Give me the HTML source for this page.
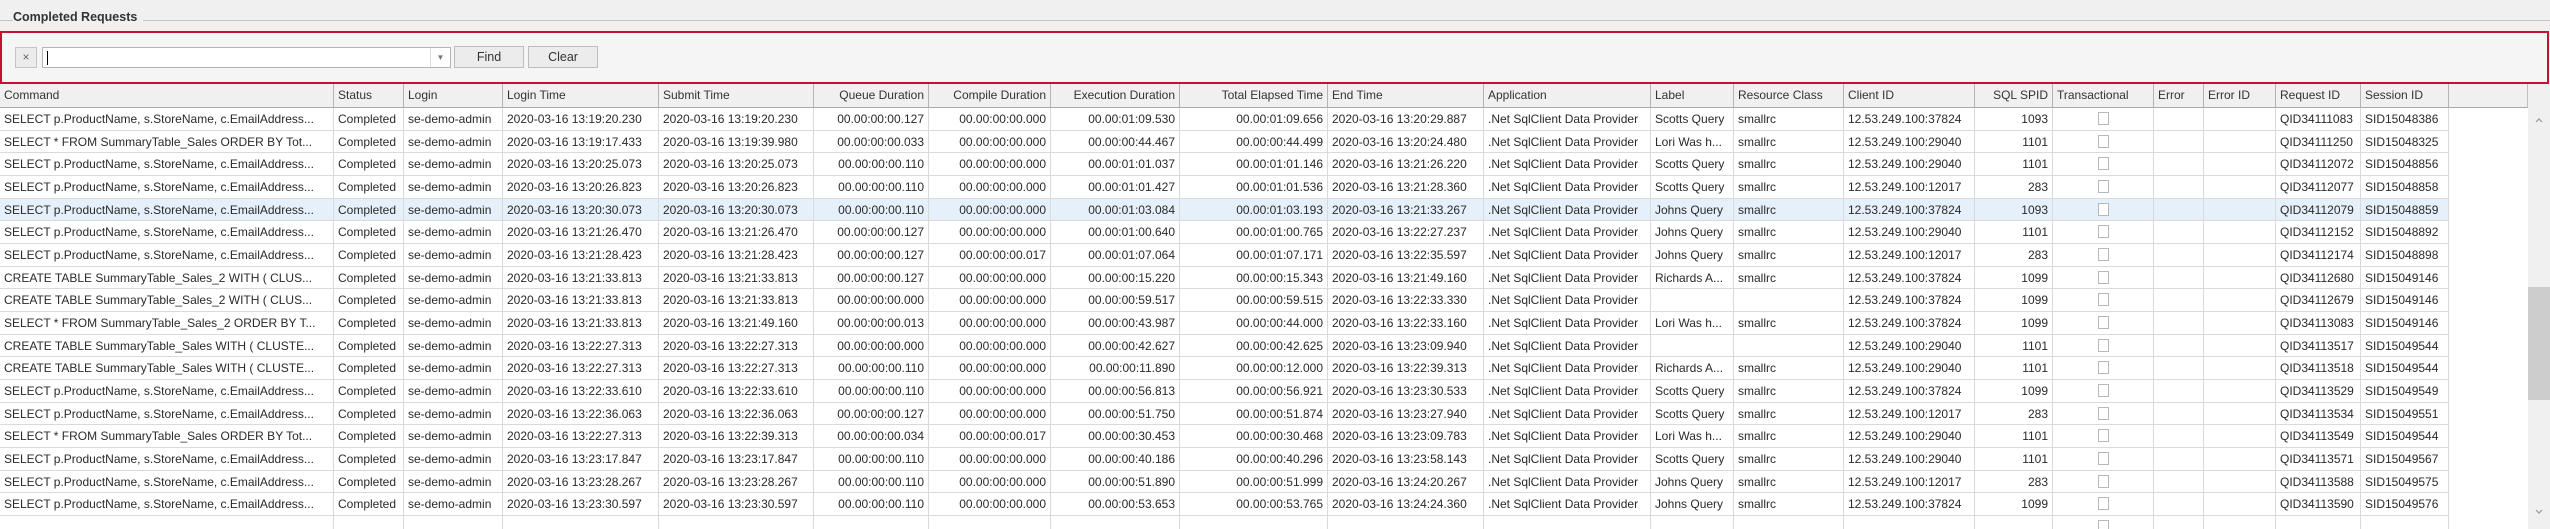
<!DOCTYPE html>
<html><head><meta charset="utf-8"><style>
*{margin:0;padding:0;box-sizing:border-box}
body{width:2550px;height:529px;overflow:hidden;background:#f0f0f0;font-family:"Liberation Sans",sans-serif;font-size:12px;color:#2a2a2a;position:relative}
.title{position:absolute;left:13px;top:10px;font-weight:bold;font-size:12.5px;color:#333;background:#f0f0f0;padding-right:6px}
.tline{position:absolute;left:0;top:20px;width:2550px;height:1px;background:#c6c6c6}
.box{position:absolute;left:0;top:31px;width:2549px;height:53px;border:2px solid #c41230;background:#f5f5f5}
.xb{position:absolute;left:15px;top:47px;width:22px;height:21px;border:1px solid #c4c4c4;background:#ececec;color:#666;text-align:center;line-height:19px;font-size:12px}
.inp{position:absolute;left:42px;top:47px;width:409px;height:21px;border:1px solid #b5b5b5;background:#fff}
.inp .cur{position:absolute;left:4px;top:3px;width:1px;height:14px;background:#000}
.inp .dd{position:absolute;right:0;top:0;width:20px;height:19px;border-left:1px solid #ddd;font-size:8px;color:#777;text-align:center;line-height:19px}
.btn{position:absolute;top:46px;height:22px;border:1px solid #bdbdbd;background:#ececec;color:#333;text-align:center;line-height:20px;font-size:12.5px}
.hdr,.row{display:grid;grid-template-columns:334px 70px 99px 156px 155px 115px 122px 129px 148px 156px 167px 83px 110px 131px 78px 101px 50px 72px 85px 88px;width:2449px}
.hdr{position:absolute;left:0;top:84px;height:24px;background:#f0f0f0}
.hwrap{position:absolute;left:0;top:84px;width:2528px;height:24px;background:#f0f0f0;border-bottom:1px solid #a9a9a9;border-right:1px solid #c0c0c0}
.hdr i{font-style:normal;border-right:1px solid #b4b4b4;border-bottom:1px solid #a9a9a9;padding:0 4px;line-height:23px;white-space:nowrap;overflow:hidden;color:#333}
.bodyw{position:absolute;left:0;top:108px;width:2528px;height:421px;background:#fff;overflow:hidden}
.row{height:22.667px}
.row i{font-style:normal;border-right:1px solid #dadada;border-bottom:1px solid #dadada;padding:0 4px;line-height:22px;white-space:nowrap;overflow:hidden}
.r{text-align:right}
.c{position:relative}
.c b{position:absolute;left:45px;top:4px;width:11px;height:13px;border:1px solid #b8b8b8;background:#fff}
.sel{background:#e5f0fa}
.sb{position:absolute;left:2528px;top:108px;width:22px;height:421px;background:#f0f0f0}
.thumb{position:absolute;left:2528px;top:287px;width:22px;height:113px;background:#cdcdcd}
.ar{position:absolute;left:2534px}
</style></head><body>
<div class="tline"></div>
<div class="title">Completed Requests</div>
<div class="box"></div>
<div class="xb">×</div>
<div class="inp"><div class="cur"></div><div class="dd">▼</div></div>
<div class="btn" style="left:454px;width:70px">Find</div>
<div class="btn" style="left:528px;width:70px">Clear</div>
<div class="hwrap"></div>
<div class="hdr"><i>Command</i><i>Status</i><i>Login</i><i>Login Time</i><i>Submit Time</i><i class="r">Queue Duration</i><i class="r">Compile Duration</i><i class="r">Execution Duration</i><i class="r">Total Elapsed Time</i><i>End Time</i><i>Application</i><i>Label</i><i>Resource Class</i><i>Client ID</i><i class="r">SQL SPID</i><i>Transactional</i><i>Error</i><i>Error ID</i><i>Request ID</i><i>Session ID</i></div>
<div class="bodyw">
<div class="row"><i>SELECT p.ProductName, s.StoreName, c.EmailAddress...</i><i>Completed</i><i>se-demo-admin</i><i>2020-03-16 13:19:20.230</i><i>2020-03-16 13:19:20.230</i><i class="r">00.00:00:00.127</i><i class="r">00.00:00:00.000</i><i class="r">00.00:01:09.530</i><i class="r">00.00:01:09.656</i><i>2020-03-16 13:20:29.887</i><i>.Net SqlClient Data Provider</i><i>Scotts Query</i><i>smallrc</i><i>12.53.249.100:37824</i><i class="r">1093</i><i class="c"><b></b></i><i></i><i></i><i>QID34111083</i><i>SID15048386</i></div>
<div class="row"><i>SELECT * FROM SummaryTable_Sales ORDER BY Tot...</i><i>Completed</i><i>se-demo-admin</i><i>2020-03-16 13:19:17.433</i><i>2020-03-16 13:19:39.980</i><i class="r">00.00:00:00.033</i><i class="r">00.00:00:00.000</i><i class="r">00.00:00:44.467</i><i class="r">00.00:00:44.499</i><i>2020-03-16 13:20:24.480</i><i>.Net SqlClient Data Provider</i><i>Lori Was h...</i><i>smallrc</i><i>12.53.249.100:29040</i><i class="r">1101</i><i class="c"><b></b></i><i></i><i></i><i>QID34111250</i><i>SID15048325</i></div>
<div class="row"><i>SELECT p.ProductName, s.StoreName, c.EmailAddress...</i><i>Completed</i><i>se-demo-admin</i><i>2020-03-16 13:20:25.073</i><i>2020-03-16 13:20:25.073</i><i class="r">00.00:00:00.110</i><i class="r">00.00:00:00.000</i><i class="r">00.00:01:01.037</i><i class="r">00.00:01:01.146</i><i>2020-03-16 13:21:26.220</i><i>.Net SqlClient Data Provider</i><i>Scotts Query</i><i>smallrc</i><i>12.53.249.100:29040</i><i class="r">1101</i><i class="c"><b></b></i><i></i><i></i><i>QID34112072</i><i>SID15048856</i></div>
<div class="row"><i>SELECT p.ProductName, s.StoreName, c.EmailAddress...</i><i>Completed</i><i>se-demo-admin</i><i>2020-03-16 13:20:26.823</i><i>2020-03-16 13:20:26.823</i><i class="r">00.00:00:00.110</i><i class="r">00.00:00:00.000</i><i class="r">00.00:01:01.427</i><i class="r">00.00:01:01.536</i><i>2020-03-16 13:21:28.360</i><i>.Net SqlClient Data Provider</i><i>Scotts Query</i><i>smallrc</i><i>12.53.249.100:12017</i><i class="r">283</i><i class="c"><b></b></i><i></i><i></i><i>QID34112077</i><i>SID15048858</i></div>
<div class="row sel"><i>SELECT p.ProductName, s.StoreName, c.EmailAddress...</i><i>Completed</i><i>se-demo-admin</i><i>2020-03-16 13:20:30.073</i><i>2020-03-16 13:20:30.073</i><i class="r">00.00:00:00.110</i><i class="r">00.00:00:00.000</i><i class="r">00.00:01:03.084</i><i class="r">00.00:01:03.193</i><i>2020-03-16 13:21:33.267</i><i>.Net SqlClient Data Provider</i><i>Johns Query</i><i>smallrc</i><i>12.53.249.100:37824</i><i class="r">1093</i><i class="c"><b></b></i><i></i><i></i><i>QID34112079</i><i>SID15048859</i></div>
<div class="row"><i>SELECT p.ProductName, s.StoreName, c.EmailAddress...</i><i>Completed</i><i>se-demo-admin</i><i>2020-03-16 13:21:26.470</i><i>2020-03-16 13:21:26.470</i><i class="r">00.00:00:00.127</i><i class="r">00.00:00:00.000</i><i class="r">00.00:01:00.640</i><i class="r">00.00:01:00.765</i><i>2020-03-16 13:22:27.237</i><i>.Net SqlClient Data Provider</i><i>Johns Query</i><i>smallrc</i><i>12.53.249.100:29040</i><i class="r">1101</i><i class="c"><b></b></i><i></i><i></i><i>QID34112152</i><i>SID15048892</i></div>
<div class="row"><i>SELECT p.ProductName, s.StoreName, c.EmailAddress...</i><i>Completed</i><i>se-demo-admin</i><i>2020-03-16 13:21:28.423</i><i>2020-03-16 13:21:28.423</i><i class="r">00.00:00:00.127</i><i class="r">00.00:00:00.017</i><i class="r">00.00:01:07.064</i><i class="r">00.00:01:07.171</i><i>2020-03-16 13:22:35.597</i><i>.Net SqlClient Data Provider</i><i>Johns Query</i><i>smallrc</i><i>12.53.249.100:12017</i><i class="r">283</i><i class="c"><b></b></i><i></i><i></i><i>QID34112174</i><i>SID15048898</i></div>
<div class="row"><i>CREATE TABLE SummaryTable_Sales_2 WITH ( CLUS...</i><i>Completed</i><i>se-demo-admin</i><i>2020-03-16 13:21:33.813</i><i>2020-03-16 13:21:33.813</i><i class="r">00.00:00:00.127</i><i class="r">00.00:00:00.000</i><i class="r">00.00:00:15.220</i><i class="r">00.00:00:15.343</i><i>2020-03-16 13:21:49.160</i><i>.Net SqlClient Data Provider</i><i>Richards A...</i><i>smallrc</i><i>12.53.249.100:37824</i><i class="r">1099</i><i class="c"><b></b></i><i></i><i></i><i>QID34112680</i><i>SID15049146</i></div>
<div class="row"><i>CREATE TABLE SummaryTable_Sales_2 WITH ( CLUS...</i><i>Completed</i><i>se-demo-admin</i><i>2020-03-16 13:21:33.813</i><i>2020-03-16 13:21:33.813</i><i class="r">00.00:00:00.000</i><i class="r">00.00:00:00.000</i><i class="r">00.00:00:59.517</i><i class="r">00.00:00:59.515</i><i>2020-03-16 13:22:33.330</i><i>.Net SqlClient Data Provider</i><i></i><i></i><i>12.53.249.100:37824</i><i class="r">1099</i><i class="c"><b></b></i><i></i><i></i><i>QID34112679</i><i>SID15049146</i></div>
<div class="row"><i>SELECT * FROM SummaryTable_Sales_2 ORDER BY T...</i><i>Completed</i><i>se-demo-admin</i><i>2020-03-16 13:21:33.813</i><i>2020-03-16 13:21:49.160</i><i class="r">00.00:00:00.013</i><i class="r">00.00:00:00.000</i><i class="r">00.00:00:43.987</i><i class="r">00.00:00:44.000</i><i>2020-03-16 13:22:33.160</i><i>.Net SqlClient Data Provider</i><i>Lori Was h...</i><i>smallrc</i><i>12.53.249.100:37824</i><i class="r">1099</i><i class="c"><b></b></i><i></i><i></i><i>QID34113083</i><i>SID15049146</i></div>
<div class="row"><i>CREATE TABLE SummaryTable_Sales WITH ( CLUSTE...</i><i>Completed</i><i>se-demo-admin</i><i>2020-03-16 13:22:27.313</i><i>2020-03-16 13:22:27.313</i><i class="r">00.00:00:00.000</i><i class="r">00.00:00:00.000</i><i class="r">00.00:00:42.627</i><i class="r">00.00:00:42.625</i><i>2020-03-16 13:23:09.940</i><i>.Net SqlClient Data Provider</i><i></i><i></i><i>12.53.249.100:29040</i><i class="r">1101</i><i class="c"><b></b></i><i></i><i></i><i>QID34113517</i><i>SID15049544</i></div>
<div class="row"><i>CREATE TABLE SummaryTable_Sales WITH ( CLUSTE...</i><i>Completed</i><i>se-demo-admin</i><i>2020-03-16 13:22:27.313</i><i>2020-03-16 13:22:27.313</i><i class="r">00.00:00:00.110</i><i class="r">00.00:00:00.000</i><i class="r">00.00:00:11.890</i><i class="r">00.00:00:12.000</i><i>2020-03-16 13:22:39.313</i><i>.Net SqlClient Data Provider</i><i>Richards A...</i><i>smallrc</i><i>12.53.249.100:29040</i><i class="r">1101</i><i class="c"><b></b></i><i></i><i></i><i>QID34113518</i><i>SID15049544</i></div>
<div class="row"><i>SELECT p.ProductName, s.StoreName, c.EmailAddress...</i><i>Completed</i><i>se-demo-admin</i><i>2020-03-16 13:22:33.610</i><i>2020-03-16 13:22:33.610</i><i class="r">00.00:00:00.110</i><i class="r">00.00:00:00.000</i><i class="r">00.00:00:56.813</i><i class="r">00.00:00:56.921</i><i>2020-03-16 13:23:30.533</i><i>.Net SqlClient Data Provider</i><i>Scotts Query</i><i>smallrc</i><i>12.53.249.100:37824</i><i class="r">1099</i><i class="c"><b></b></i><i></i><i></i><i>QID34113529</i><i>SID15049549</i></div>
<div class="row"><i>SELECT p.ProductName, s.StoreName, c.EmailAddress...</i><i>Completed</i><i>se-demo-admin</i><i>2020-03-16 13:22:36.063</i><i>2020-03-16 13:22:36.063</i><i class="r">00.00:00:00.127</i><i class="r">00.00:00:00.000</i><i class="r">00.00:00:51.750</i><i class="r">00.00:00:51.874</i><i>2020-03-16 13:23:27.940</i><i>.Net SqlClient Data Provider</i><i>Scotts Query</i><i>smallrc</i><i>12.53.249.100:12017</i><i class="r">283</i><i class="c"><b></b></i><i></i><i></i><i>QID34113534</i><i>SID15049551</i></div>
<div class="row"><i>SELECT * FROM SummaryTable_Sales ORDER BY Tot...</i><i>Completed</i><i>se-demo-admin</i><i>2020-03-16 13:22:27.313</i><i>2020-03-16 13:22:39.313</i><i class="r">00.00:00:00.034</i><i class="r">00.00:00:00.017</i><i class="r">00.00:00:30.453</i><i class="r">00.00:00:30.468</i><i>2020-03-16 13:23:09.783</i><i>.Net SqlClient Data Provider</i><i>Lori Was h...</i><i>smallrc</i><i>12.53.249.100:29040</i><i class="r">1101</i><i class="c"><b></b></i><i></i><i></i><i>QID34113549</i><i>SID15049544</i></div>
<div class="row"><i>SELECT p.ProductName, s.StoreName, c.EmailAddress...</i><i>Completed</i><i>se-demo-admin</i><i>2020-03-16 13:23:17.847</i><i>2020-03-16 13:23:17.847</i><i class="r">00.00:00:00.110</i><i class="r">00.00:00:00.000</i><i class="r">00.00:00:40.186</i><i class="r">00.00:00:40.296</i><i>2020-03-16 13:23:58.143</i><i>.Net SqlClient Data Provider</i><i>Scotts Query</i><i>smallrc</i><i>12.53.249.100:29040</i><i class="r">1101</i><i class="c"><b></b></i><i></i><i></i><i>QID34113571</i><i>SID15049567</i></div>
<div class="row"><i>SELECT p.ProductName, s.StoreName, c.EmailAddress...</i><i>Completed</i><i>se-demo-admin</i><i>2020-03-16 13:23:28.267</i><i>2020-03-16 13:23:28.267</i><i class="r">00.00:00:00.110</i><i class="r">00.00:00:00.000</i><i class="r">00.00:00:51.890</i><i class="r">00.00:00:51.999</i><i>2020-03-16 13:24:20.267</i><i>.Net SqlClient Data Provider</i><i>Johns Query</i><i>smallrc</i><i>12.53.249.100:12017</i><i class="r">283</i><i class="c"><b></b></i><i></i><i></i><i>QID34113588</i><i>SID15049575</i></div>
<div class="row"><i>SELECT p.ProductName, s.StoreName, c.EmailAddress...</i><i>Completed</i><i>se-demo-admin</i><i>2020-03-16 13:23:30.597</i><i>2020-03-16 13:23:30.597</i><i class="r">00.00:00:00.110</i><i class="r">00.00:00:00.000</i><i class="r">00.00:00:53.653</i><i class="r">00.00:00:53.765</i><i>2020-03-16 13:24:24.360</i><i>.Net SqlClient Data Provider</i><i>Johns Query</i><i>smallrc</i><i>12.53.249.100:37824</i><i class="r">1099</i><i class="c"><b></b></i><i></i><i></i><i>QID34113590</i><i>SID15049576</i></div>
<div class="row"><i></i><i></i><i></i><i></i><i></i><i></i><i></i><i></i><i></i><i></i><i></i><i></i><i></i><i></i><i></i><i class="c"><b></b></i><i></i><i></i><i></i><i></i></div>
</div>
<div class="sb"></div>
<div class="thumb"></div>
<svg class="ar" style="top:116px" width="10" height="8" viewBox="0 0 10 8"><path d="M2 6 L5 3 L8 6" fill="none" stroke="#999" stroke-width="1.2"/></svg>
<svg class="ar" style="top:508px" width="10" height="8" viewBox="0 0 10 8"><path d="M2 2 L5 5 L8 2" fill="none" stroke="#999" stroke-width="1.2"/></svg>
</body></html>
